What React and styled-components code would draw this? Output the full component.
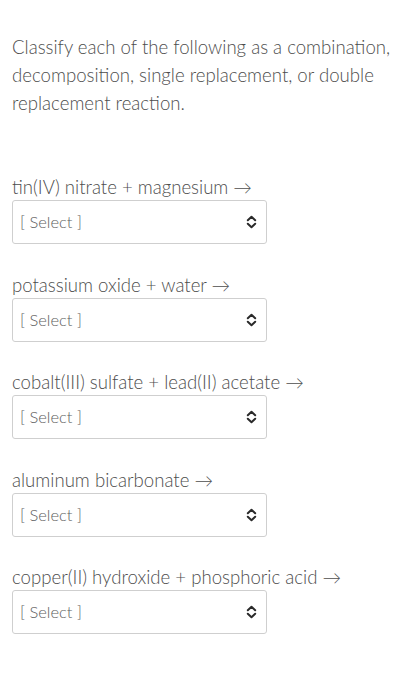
import React from "react";
import styled, { createGlobalStyle } from "styled-components";

const Global = createGlobalStyle`
  body {
    margin: 0;
    background: #ffffff;
    font-family: Lato, "Open Sans", sans-serif;
    font-weight: 300;
    color: #555555;
  }
`;

const Page = styled.div`
  padding: 33px 12px 40px 12px;
`;

const Intro = styled.p`
  margin: 0 0 58px 0;
  font-size: 18.6px;
  font-weight: 300;
  line-height: 28px;
  color: #4d4d4d;
`;

const Group = styled.div`
  display: flex;
  flex-direction: column;
  gap: 1px;
  margin-bottom: 28.5px;
`;

const Label = styled.div`
  font-size: 18.6px;
  font-weight: 300;
  line-height: 24px;
  color: #4d4d4d;
`;

const SelectBox = styled.div`
  box-sizing: border-box;
  width: 255px;
  height: 44px;
  border: 1px solid #cfcfcf;
  border-radius: 3px;
  display: flex;
  align-items: center;
  justify-content: space-between;
  padding: 0 9px 0 7px;
  font-size: 16.5px;
  font-weight: 300;
  color: #5e5e5e;
`;

const Chevron = () => (
  <svg width="11" height="14" viewBox="0 0 11 14" fill="none">
    <path d="M1.8 5.2 L5.5 1.8 L9.2 5.2" stroke="#2a2a2a" strokeWidth="2" strokeLinecap="round" strokeLinejoin="round" />
    <path d="M1.8 8.8 L5.5 12.2 L9.2 8.8" stroke="#2a2a2a" strokeWidth="2" strokeLinecap="round" strokeLinejoin="round" />
  </svg>
);

const items = [
  "tin(IV) nitrate + magnesium →",
  "potassium oxide + water →",
  "cobalt(III) sulfate + lead(II) acetate →",
  "aluminum bicarbonate →",
  "copper(II) hydroxide + phosphoric acid →",
];

export default function App() {
  return (
    <>
      <Global />
      <Page>
        <Intro>
          Classify each of the following as a combination, decomposition,
          single replacement, or double replacement reaction.
        </Intro>
        {items.map((t) => (
          <Group key={t}>
            <Label>{t}</Label>
            <SelectBox>
              <span>[ Select ]</span>
              <Chevron />
            </SelectBox>
          </Group>
        ))}
      </Page>
    </>
  );
}
